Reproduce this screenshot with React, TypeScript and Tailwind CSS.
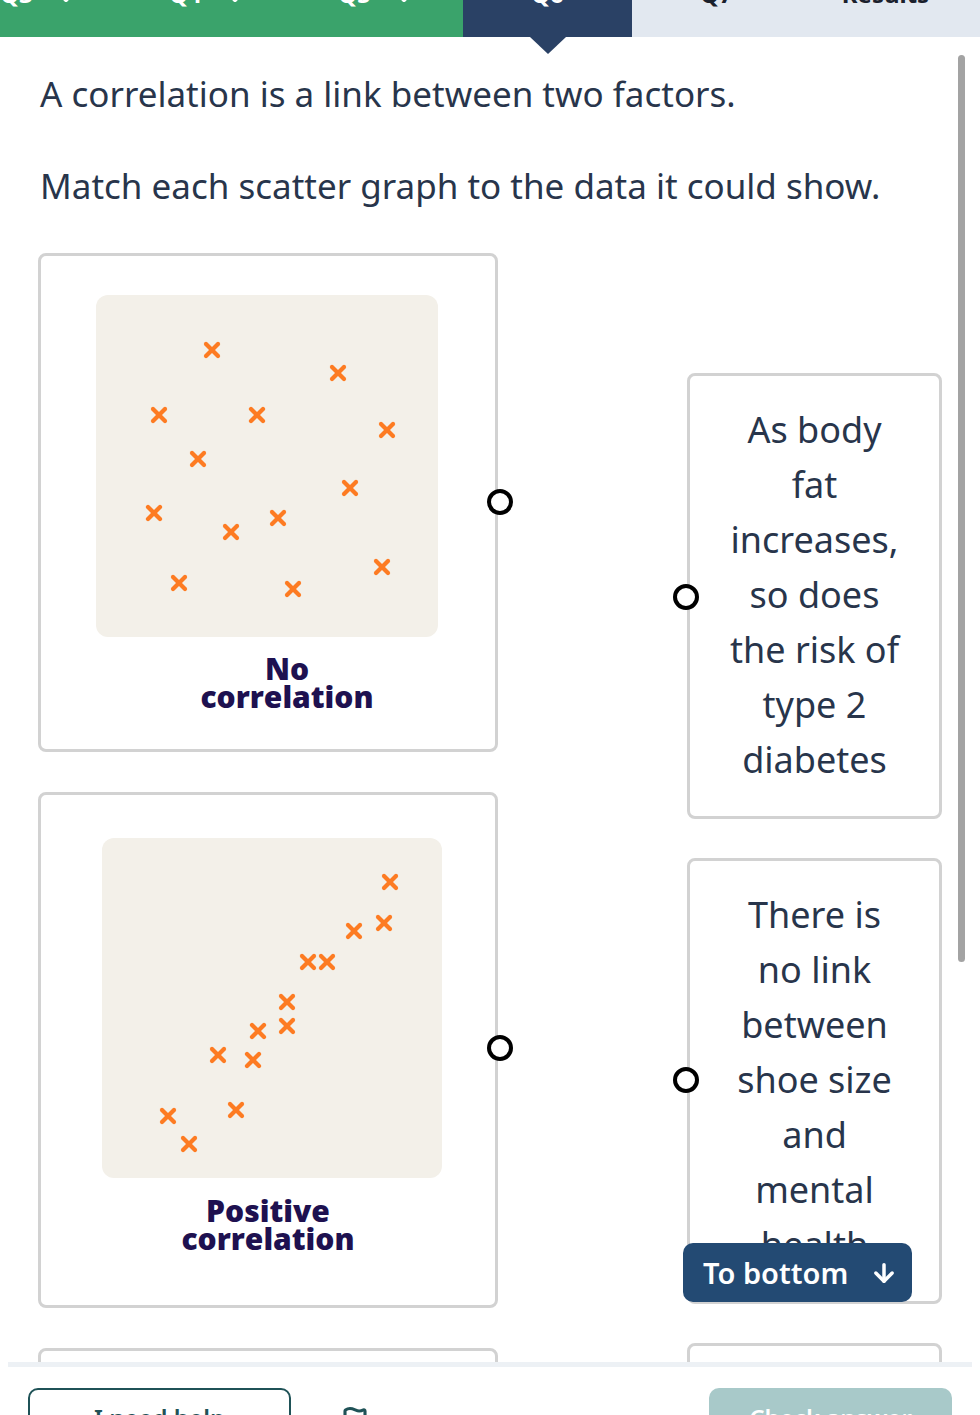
import { Check, ArrowDown, Flag } from 'lucide-react'

type Pt = [number, number]

// point positions measured off the graphs (px inside a 342 box)
const noCorrelation: Pt[] = [
  [116, 55], [242, 78], [63, 120], [161, 120], [291, 135], [102, 164], [254, 193],
  [58, 218], [182, 223], [135, 237], [286, 272], [83, 288], [197, 294],
]

const positive: Pt[] = [
  [288, 44], [282, 85], [252, 93], [206, 124], [225, 124], [185, 164], [156, 193],
  [185, 188], [116, 217], [151, 222], [134, 272], [66, 278], [87, 306],
]

const tabs = [
  { label: 'Q3', done: true },
  { label: 'Q4', done: true },
  { label: 'Q5', done: true },
  { label: 'Q6', current: true },
  { label: 'Q7' },
  { label: 'Results' },
]

const bodyFont = { fontFamily: '"Noto Sans", "Open Sans", sans-serif' }
const labelFont = { fontFamily: '"Open Sans", "Noto Sans", sans-serif' }

function ScatterGraph({ points, size }: { points: Pt[]; size: number }) {
  return (
    <div className="rounded-[12px] bg-[#f3f0e9]" style={{ width: size, height: size }}>
      <svg width={size} height={size} viewBox={`0 0 ${size} ${size}`}>
        {points.map(([x, y], i) => (
          <g key={i} stroke="#fd7b22" strokeWidth={4.2} strokeLinecap="round">
            <line x1={x - 6} y1={y - 6} x2={x + 6} y2={y + 6} />
            <line x1={x + 6} y1={y - 6} x2={x - 6} y2={y + 6} />
          </g>
        ))}
      </svg>
    </div>
  )
}

function Dot({ className }: { className: string }) {
  return (
    <span
      className={`absolute w-[26px] h-[26px] rounded-full border-[4px] border-black bg-white ${className}`}
    />
  )
}

function AnswerCard({ lines, dotTop }: { lines: string[]; dotTop: string }) {
  return (
    <div className="relative rounded-[8px] border-[3px] border-[#d2d2d2] bg-white pt-[26px] pb-[29px] text-center text-[36px] leading-[55px] text-[#28354b]">
      {lines.map((l) => (
        <div key={l}>{l}</div>
      ))}
      <Dot className={`left-[-17px] ${dotTop}`} />
    </div>
  )
}

export default function App() {
  return (
    <div className="relative h-[1415px] w-[980px] overflow-hidden bg-white" style={bodyFont}>
      {/* ── Question tabs (scrolled, labels clipped at top) ── */}
      <div className="relative">
        <div className="flex h-[37px] overflow-hidden bg-[#e2e8f0]">
          <div className="flex -ml-[44px]">
            {tabs.map((t) => (
              <div
                key={t.label}
                className={`w-[169px] shrink-0 flex justify-center ${
                  t.done ? 'bg-[#3aa36b] text-white' : t.current ? 'bg-[#2a4165] text-white' : 'text-[#1a202c]'
                }`}
              >
                <div className="-mt-[17px] flex items-center gap-[24px] h-[22px] text-[24px] font-bold leading-[22px]">
                  <span>{t.label}</span>
                  {t.done && <Check size={24} strokeWidth={4} className="mt-[2px]" />}
                </div>
              </div>
            ))}
          </div>
        </div>
        <div className="absolute left-[530px] top-[37px] w-0 h-0 border-l-[18px] border-r-[18px] border-t-[17px] border-l-transparent border-r-transparent border-t-[#2a4165]" />
      </div>

      {/* ── Question ── */}
      <div className="pl-[40px] pt-[34px] text-[35px] leading-[46px] text-[#28354b]">
        <p>A correlation is a link between two factors.</p>
        <p className="mt-[46px]">Match each scatter graph to the data it could show.</p>
      </div>

      {/* ── Matching area ── */}
      <div className="mt-[44px] pl-[38px] grid grid-cols-[460px_255px] gap-x-[189px] items-start">
        <div className="flex flex-col gap-[40px]">
          <div className="relative rounded-[8px] border-[3px] border-[#d2d2d2] bg-white pt-[39px] pb-[38px]">
            <div className="ml-[55px]">
              <ScatterGraph points={noCorrelation} size={342} />
            </div>
            <div
              className="mt-[18px] pl-[38px] text-center text-[30px] font-extrabold leading-[28px] text-[#1e1150]"
              style={labelFont}
            >
              No
              <br />
              correlation
            </div>
            <Dot className="right-[-18px] top-[233px]" />
          </div>

          <div className="relative rounded-[8px] border-[3px] border-[#d2d2d2] bg-white pt-[43px] pb-[52px]">
            <div className="ml-[61px]">
              <ScatterGraph points={positive} size={340} />
            </div>
            <div
              className="mt-[19px] text-center text-[30px] font-extrabold leading-[28px] text-[#1e1150]"
              style={labelFont}
            >
              Positive
              <br />
              correlation
            </div>
            <Dot className="right-[-18px] top-[240px]" />
          </div>

          <div className="h-[300px] rounded-[8px] border-[3px] border-[#d2d2d2] bg-white" />
        </div>

        <div className="mt-[120px] flex flex-col gap-[39px]">
          <AnswerCard
            lines={['As body', 'fat', 'increases,', 'so does', 'the risk of', 'type 2', 'diabetes']}
            dotTop="top-[208px]"
          />
          <AnswerCard
            lines={['There is', 'no link', 'between', 'shoe size', 'and', 'mental', 'health']}
            dotTop="top-[206px]"
          />
          <div className="h-[300px] rounded-[8px] border-[3px] border-[#d2d2d2] bg-white" />
        </div>
      </div>

      {/* ── Floating bits ── */}
      <div className="absolute left-[958px] top-[55px] h-[907px] w-[7px] rounded-full bg-[#a3a3a3]" />

      <button className="absolute left-[683px] top-[1243px] flex h-[59px] w-[229px] items-center gap-[22px] rounded-[10px] bg-[#234a73] pl-[20px] text-[29px] font-semibold text-white">
        To bottom
        <ArrowDown size={28} strokeWidth={3} />
      </button>

      {/* ── Footer ── */}
      <div className="absolute left-0 right-0 top-[1362px] bottom-0 bg-white">
        <div className="mx-2 h-[5px] bg-[#edf1f5]" />
        <div className="mt-[21px] flex items-start pl-[28px] pr-[28px]">
          <button className="h-[60px] w-[263px] rounded-[10px] border-2 border-[#1f5257] text-[24px] font-semibold text-[#1f5257]">
            I need help
          </button>
          <Flag size={30} strokeWidth={2.5} className="ml-[49px] mt-[18px] text-[#1f5257]" />
          <button className="ml-auto h-[60px] w-[243px] rounded-[10px] bg-[#a8c9c9] text-[24px] font-semibold text-white">
            Check answer
          </button>
        </div>
      </div>
    </div>
  )
}
